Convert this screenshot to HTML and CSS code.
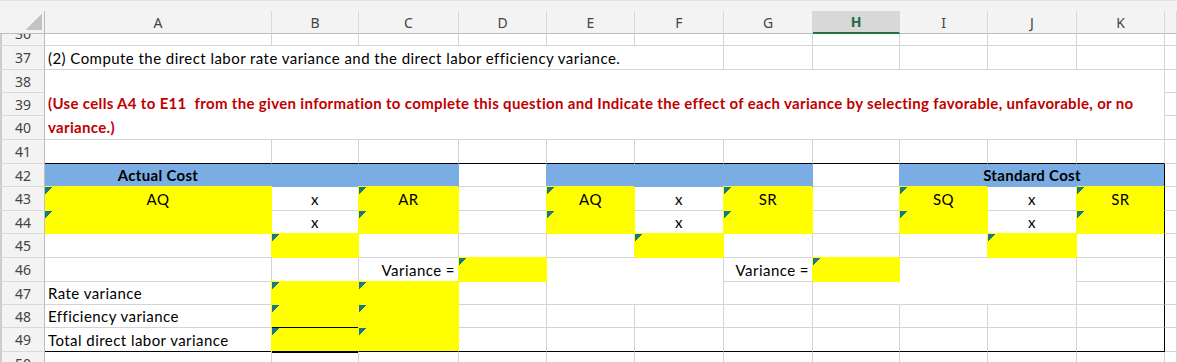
FILE: index.html
```html
<!DOCTYPE html>
<html lang="en">
<head>
    <meta charset="UTF-8">
    <title>Direct labor variance</title>
    <link rel="stylesheet" href="styles.css">
</head>
<body>
    <div class="sheet">
        <div class="strip"></div>

        <!-- column headers -->
        <div class="hd corner"></div>
        <div class="hd">A</div>
        <div class="hd">B</div>
        <div class="hd">C</div>
        <div class="hd">D</div>
        <div class="hd">E</div>
        <div class="hd">F</div>
        <div class="hd">G</div>
        <div class="hd sel">H</div>
        <div class="hd">I</div>
        <div class="hd">J</div>
        <div class="hd">K</div>
        <div class="hd"></div>

        <!-- 36 -->
        <div class="rh clip"><span>36</span></div>
        <div class="c"></div><div class="c"></div><div class="c"></div><div class="c"></div><div class="c"></div><div class="c"></div>
        <div class="c"></div><div class="c"></div><div class="c"></div><div class="c"></div><div class="c"></div><div class="c"></div>

        <!-- 37 -->
        <div class="rh">37</div>
        <div class="c span6">(2) Compute the direct labor rate variance and the direct labor efficiency variance.</div>
        <div class="c"></div><div class="c"></div><div class="c"></div><div class="c"></div><div class="c"></div><div class="c"></div>

        <!-- 38 - 40 -->
        <div class="rh">38</div>
        <div class="c note">(Use cells A4 to E11&nbsp; from the given information to complete this question and Indicate the effect of each variance by selecting favorable, unfavorable, or no<br>variance.)</div>
        <div class="c"></div>
        <div class="rh">39</div>
        <div class="c"></div>
        <div class="rh">40</div>
        <div class="c"></div>

        <!-- 41 -->
        <div class="rh">41</div>
        <div class="c top"></div><div class="c top"></div><div class="c top"></div><div class="c top"></div><div class="c top"></div><div class="c top"></div>
        <div class="c top"></div><div class="c top"></div><div class="c top"></div><div class="c top"></div><div class="c top"></div><div class="c"></div>

        <!-- 42 -->
        <div class="rh">42</div>
        <div class="c bl ns ctr bold">Actual Cost</div>
        <div class="c bl"></div>
        <div class="c bl"></div>
        <div class="c"></div>
        <div class="c bl"></div>
        <div class="c bl"></div>
        <div class="c bl"></div>
        <div class="c"></div>
        <div class="c bl"></div>
        <div class="c bl ctr bold over">Standard Cost</div>
        <div class="c bl k"></div>
        <div class="c"></div>

        <!-- 43 -->
        <div class="rh">43</div>
        <div class="c y na t ctr">AQ</div>
        <div class="c ctr">x</div>
        <div class="c y t ctr">AR</div>
        <div class="c"></div>
        <div class="c y t ctr">AQ</div>
        <div class="c ctr">x</div>
        <div class="c y t ctr">SR</div>
        <div class="c"></div>
        <div class="c y t ctr">SQ</div>
        <div class="c ctr">x</div>
        <div class="c y t ctr k">SR</div>
        <div class="c"></div>

        <!-- 44 -->
        <div class="rh">44</div>
        <div class="c y na t"></div>
        <div class="c ctr">x</div>
        <div class="c y t"></div>
        <div class="c"></div>
        <div class="c y t"></div>
        <div class="c ctr">x</div>
        <div class="c y t"></div>
        <div class="c"></div>
        <div class="c y t"></div>
        <div class="c ctr">x</div>
        <div class="c y t k"></div>
        <div class="c"></div>

        <!-- 45 -->
        <div class="rh">45</div>
        <div class="c"></div>
        <div class="c y t"></div>
        <div class="c"></div>
        <div class="c"></div>
        <div class="c"></div>
        <div class="c y t"></div>
        <div class="c"></div>
        <div class="c"></div>
        <div class="c"></div>
        <div class="c y t"></div>
        <div class="c k"></div>
        <div class="c"></div>

        <!-- 46 -->
        <div class="rh">46</div>
        <div class="c"></div>
        <div class="c"></div>
        <div class="c rt">Variance =</div>
        <div class="c y t"></div>
        <div class="c merge"></div>
        <div class="c rt">Variance =</div>
        <div class="c y t"></div>
        <div class="c merge"></div>
        <div class="c k"></div>
        <div class="c"></div>

        <!-- 47 -->
        <div class="rh">47</div>
        <div class="c">Rate variance</div>
        <div class="c y t"></div>
        <div class="c y t"></div>
        <div class="c"></div>
        <div class="c"></div>
        <div class="c nr"></div>
        <div class="c k"></div>
        <div class="c"></div>

        <!-- 48 -->
        <div class="rh">48</div>
        <div class="c">Efficiency variance</div>
        <div class="c y t line"></div>
        <div class="c y t"></div>
        <div class="c"></div><div class="c"></div><div class="c"></div><div class="c"></div>
        <div class="c"></div><div class="c"></div><div class="c"></div>
        <div class="c k"></div>
        <div class="c"></div>

        <!-- 49 -->
        <div class="rh">49</div>
        <div class="c bot">Total direct labor variance</div>
        <div class="c y t nt bot"></div>
        <div class="c y t bot"></div>
        <div class="c bot"></div><div class="c bot"></div><div class="c bot"></div><div class="c bot"></div>
        <div class="c bot"></div><div class="c bot"></div><div class="c bot"></div>
        <div class="c bot k"></div>
        <div class="c"></div>

        <!-- 50 -->
        <div class="rh">50</div>
        <div class="c"></div>
        <div class="c dbl"></div>
        <div class="c"></div><div class="c"></div><div class="c"></div><div class="c"></div><div class="c"></div>
        <div class="c"></div><div class="c"></div><div class="c"></div><div class="c"></div><div class="c"></div>
    </div>
</body>
</html>
```

FILE: styles.css
```css
body {
    margin: 0;
    background: #fff;
    font-family: Lato, "Liberation Sans", sans-serif;
}
.sheet {
    display: grid;
    grid-template-columns: 45px 227px 87px 100px 88px 88px 89px 89px 87px 88px 89px 88px 1fr;
    grid-template-rows: 11px 23px 12px 24px 23px 23px 24px 24px 23px 24px 23px 24px 24px 23px 23px 24px 24px;
    height: 362px;
    overflow: hidden;
}
.strip {
    grid-column: 1 / -1;
    background: #f3f3f3;
    border-top: 1px solid #e2e2e2;
}

/* headers */
.hd {
    display: flex;
    align-items: center;
    justify-content: center;
    background: #f3f3f3;
    border-right: 1px solid #d9d9d9;
    border-bottom: 1px solid #bdbdbd;
    color: #444;
    font-family: "Noto Sans", sans-serif;
    font-size: 14px;
}
.hd.sel {
    background: #d8d8d8;
    color: #1d6b41;
    font-weight: bold;
    border-bottom: 2px solid #217346;
}
.corner {
    position: relative;
    border-right-color: #bdbdbd;
}
.corner::after {
    content: "";
    position: absolute;
    right: 2px;
    bottom: 3px;
    width: 17px;
    height: 17px;
    background: linear-gradient(to top left, #c3c3c3 50%, transparent 50%);
}
.rh {
    display: flex;
    align-items: center;
    justify-content: center;
    background: #f3f3f3;
    border-left: 2px solid #cdcdcd;
    border-right: 1px solid #bdbdbd;
    border-bottom: 1px solid #d9d9d9;
    color: #444;
    font-family: "Noto Sans", sans-serif;
    font-size: 14px;
    overflow: hidden;
}
.rh.clip { align-items: flex-start; }
.rh.clip span { line-height: 24px; margin-top: -12px; }

/* cells */
.c {
    position: relative;
    display: flex;
    align-items: flex-end;
    min-width: 0;
    padding: 0 3px 2px;
    border-right: 1px solid #d4d4d4;
    border-bottom: 1px solid #d4d4d4;
    font-size: 15px;
    line-height: 18px;
    letter-spacing: 0.45px;
    color: #000;
    white-space: nowrap;
}
.ctr { justify-content: center; }
.rt { justify-content: flex-end; }
.bold { font-weight: bold; letter-spacing: 0.3px; }
.over { z-index: 1; }
.span6 { grid-column: span 6; }
.merge { grid-column: span 2; grid-row: span 2; }
.note {
    grid-column: span 11;
    grid-row: span 3;
    color: #c00000;
    font-weight: bold;
    letter-spacing: 0.33px;
    line-height: 23.5px;
    padding-bottom: 0;
}

.y {
    background: #ffff00;
    border-color: #ffff00;
    box-shadow: -1px -1px 0 #ffff00;
}
.bl {
    background: #7aade3;
    border-color: #7aade3;
    box-shadow: -1px 0 0 #7aade3;
}
.na { box-shadow: 0 -1px 0 #ffff00; }
.nt { box-shadow: -1px 0 0 #ffff00; }
.ns { box-shadow: none; }
.nr { border-right-color: transparent; }

.t::before {
    content: "";
    position: absolute;
    left: 0;
    top: 0;
    width: 8px;
    height: 7px;
    background: linear-gradient(to bottom right, #16788a 50%, transparent 50%);
}

.top { border-bottom-color: #000; }
.bot { border-bottom-color: #000; }
.line { border-bottom-color: #000; }
.k { border-right-color: #000; }
.dbl { box-shadow: inset 0 1px 0 #000; }
```
